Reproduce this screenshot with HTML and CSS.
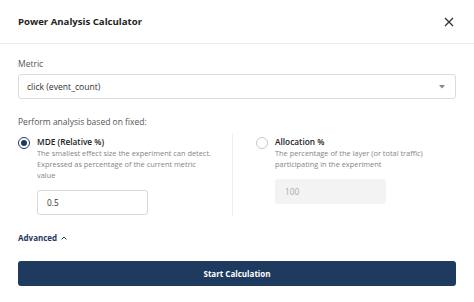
FILE: index.html
```html
<!DOCTYPE html>
<html>
<head>
<meta charset="utf-8">
<link rel="stylesheet" href="styles.css">
</head>
<body>
<div class="modal">
  <div class="header">
    <div class="title">Power Analysis Calculator</div>
    <svg class="close" width="10" height="10" viewBox="0 0 10 10"><path d="M1 1L9 9M9 1L1 9" stroke="#333" stroke-width="1.3" fill="none"/></svg>
  </div>
  <div class="body">
    <div class="label">Metric</div>
    <div class="select">
      <span>click (event_count)</span>
      <svg class="caret" width="6" height="4" viewBox="0 0 6 4"><path d="M0 0H6L3 3.5Z" fill="#888"/></svg>
    </div>
    <div class="label perform">Perform analysis based on fixed:</div>
    <div class="options">
      <div class="opt left">
        <div class="radio on"><span class="dot"></span></div>
        <div class="opt-body">
          <div class="opt-title">MDE (Relative %)</div>
          <div class="opt-desc">The smallest effect size the experiment can detect.<br>Expressed as percentage of the current metric<br>value</div>
          <div class="input">0.5</div>
        </div>
      </div>
      <div class="divider"></div>
      <div class="opt right">
        <div class="radio"></div>
        <div class="opt-body">
          <div class="opt-title">Allocation %</div>
          <div class="opt-desc">The percentage of the layer (or total traffic)<br>participating in the experiment</div>
          <div class="input disabled">100</div>
        </div>
      </div>
    </div>
    <div class="advanced">Advanced <svg width="6" height="4" viewBox="0 0 6 4"><path d="M0.6 3.4L3 1L5.4 3.4" stroke="#1f3a5f" stroke-width="1" fill="none"/></svg></div>
    <div class="button">Start Calculation</div>
  </div>
</div>
</body>
</html>
```
FILE: styles.css
```css
* { box-sizing: border-box; }
html, body { margin: 0; padding: 0; background: #fff; }
body { font-family: "Open Sans", "Noto Sans", sans-serif; color: #333; width: 474px; height: 302px; overflow: hidden; }
.header { height: 44px; display: flex; align-items: center; justify-content: space-between; padding: 0 20px 0 18px; border-bottom: 1px solid #ececec; }
.title { font-size: 9.6px; font-weight: 700; color: #222; }
.close { display: block; }
.body { padding: 14px 18px 0 18px; }
.label { font-size: 8.5px; color: #555; line-height: 12px; }
.select { margin-top: 4px; height: 25px; border: 1px solid #dcdcdc; border-radius: 3px; display: flex; align-items: center; justify-content: space-between; padding: 0 10px 0 8px; font-size: 8.6px; color: #333; }
.perform { margin-top: 17px; }
.options { display: flex; margin-top: 5px; }
.opt { display: flex; }
.left { width: 214px; padding-bottom: 1px; }
.divider { width: 1px; background: #efefef; }
.right { padding-left: 23px; }
.radio { width: 12px; height: 12px; border-radius: 50%; border: 1px solid #c8c8c8; display: flex; align-items: center; justify-content: center; flex: none; margin-top: 4px; }
.radio.on { border: 1.5px solid #1f3a5f; }
.dot { width: 6px; height: 6px; border-radius: 50%; background: #1f3a5f; }
.opt-body { margin-left: 7px; }
.opt-title { font-size: 8.3px; font-weight: 600; color: #222; line-height: 12px; margin-top: 3px; }
.opt-desc { font-size: 7.4px; color: #858585; line-height: 11px; white-space: nowrap; }
.input { margin-top: 9px; width: 111px; height: 25px; border: 1px solid #d8d8d8; border-radius: 3px; font-size: 8.3px; color: #333; display: flex; align-items: center; padding-left: 9px; }
.input.disabled { background: #f3f3f3; border-color: #f3f3f3; color: #aaa; }
.advanced { margin-top: 16px; font-size: 8px; font-weight: 700; color: #1f3a5f; display: flex; align-items: center; gap: 4px; line-height: 12px; }
.button { margin-top: 17px; height: 25px; background: #1f3a5f; border-radius: 3px; color: #fff; font-size: 8px; font-weight: 700; display: flex; align-items: center; justify-content: center; }
```
